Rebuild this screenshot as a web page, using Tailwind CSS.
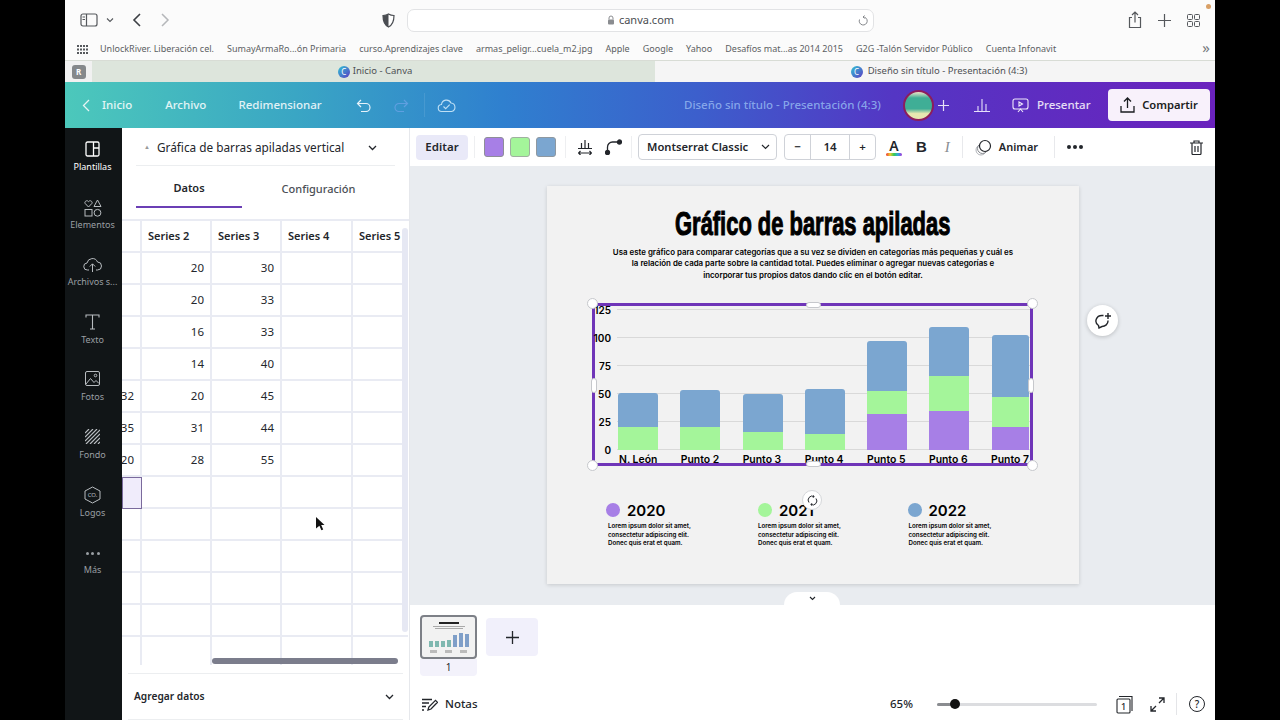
<!DOCTYPE html>
<html lang="es">
<head>
<meta charset="UTF-8">
<title>Diseño sin título - Canva</title>
<script src="https://cdn.jsdelivr.net/npm/@tailwindcss/browser@4"></script>
</head>
<body class="bg-black font-['Noto_Sans',sans-serif] overflow-hidden">
<div class="relative w-[1150px] h-[720px] ml-[65px] bg-white flex flex-col overflow-hidden">

  <!-- safari toolbar -->
  <div class="h-[38px] pt-[2px] bg-[#fbfbfb] flex items-center text-[#55585c] relative">
    <svg class="ml-[15px] w-[18px] h-[14px]" viewBox="0 0 18 14" fill="none" stroke="currentColor" stroke-width="1.2"><rect x="1" y="1" width="16" height="12" rx="2"/><path d="M6.5 1v12M2.5 4h2.500M2.500 6.500h2.500" /></svg>
    <svg class="ml-[8px] w-[8px] h-[6px]" viewBox="0 0 8 6" fill="none" stroke="currentColor" stroke-width="1.1"><path d="M1 1.500l3 3 3-3"/></svg>
    <svg class="ml-[18px] w-[10px] h-[16px]" viewBox="0 0 10 16" fill="none" stroke="#3c3f44" stroke-width="1.600"><path d="M8 2L2 8l6 6"/></svg>
    <svg class="ml-[18px] w-[10px] h-[16px]" viewBox="0 0 10 16" fill="none" stroke="#b5b7ba" stroke-width="1.500"><path d="M2 2l6 6-6 6"/></svg>
    <svg class="ml-[212px] w-[13px] h-[15px]" viewBox="0 0 13 15"><path d="M6.500 1C8 2 10 2.500 12 2.500c0 5-1.500 9.500-5.500 11.500C2.500 12 1 7.500 1 2.500 3 2.500 5 2 6.500 1z" fill="#fff" stroke="#4a4d52" stroke-width="1.200"/><path d="M6.500 1C5 2 3 2.500 1 2.500c0 5 1.500 9.500 5.500 11.500z" fill="#4a4d52"/></svg>
    <div class="ml-[12px] w-[467px] h-[23px] bg-white border border-[#e2e3e5] rounded-[7px] flex items-center justify-center relative text-[11px] text-[#4a4d52]">
      <svg class="w-[8px] h-[10px] mr-[4px]" viewBox="0 0 8 10"><path d="M2 4.500V3a2 2 0 014 0v1.500" fill="none" stroke="#8a8c90"/><rect x="1" y="4.500" width="6" height="5" rx="1" fill="#8a8c90"/></svg>
      canva.com
      <svg class="absolute right-[4px] w-[11px] h-[12px]" viewBox="0 0 11 12" fill="none" stroke="#85888c"><path d="M6.500 1.500L5 3l1.500 1.500M5 3a4 4 0 11-3.500 2.500"/></svg>
    </div>
    <svg class="ml-[254px] w-[14px] h-[18px]" viewBox="0 0 14 18" fill="none" stroke="#55585c" stroke-width="1.200"><path d="M4 6.500H1.500v10h11v-10H10M7 11.500V1.500M4 4l3-3 3 3"/></svg>
    <svg class="ml-[16px] w-[13px] h-[13px]" viewBox="0 0 13 13" stroke="#55585c" stroke-width="1.200"><path d="M6.500 0v13M0 6.500h13"/></svg>
    <svg class="ml-[16px] w-[13px] h-[13px]" viewBox="0 0 13 13" fill="none" stroke="#55585c"><rect x=".5" y=".5" width="5" height="5" rx="1"/><rect x="7.500" y=".5" width="5" height="5" rx="1"/><rect x=".5" y="7.500" width="5" height="5" rx="1"/><rect x="7.500" y="7.500" width="5" height="5" rx="1"/></svg>
    <span class="absolute right-[4px] top-[4px] w-[5px] h-[5px] rounded-full bg-[#d9a066]"></span>
  </div>

  <!-- bookmarks -->
  <div class="h-[22px] bg-[#fbfbfb] flex items-center text-[9px] text-[#5c5f63] whitespace-nowrap relative">
    <svg class="ml-[12px] w-[11px] h-[9px]" viewBox="0 0 11 9" fill="#55585c"><rect width="2" height="2"/><rect x="3" width="2" height="2"/><rect x="6" width="2" height="2"/><rect x="9" width="2" height="2"/><rect y="3.500" width="2" height="2"/><rect x="3" y="3.500" width="2" height="2"/><rect x="6" y="3.500" width="2" height="2"/><rect x="9" y="3.500" width="2" height="2"/><rect y="7" width="2" height="2"/><rect x="3" y="7" width="2" height="2"/><rect x="6" y="7" width="2" height="2"/><rect x="9" y="7" width="2" height="2"/></svg>
    <div class="ml-[12px] flex gap-[13px]">
      <span>UnlockRiver. Liberación cel.</span>
      <span>SumayArmaRo...ón Primaria</span>
      <span>curso.Aprendizajes clave</span>
      <span>armas_peligr...cuela_m2.jpg</span>
      <span>Apple</span>
      <span>Google</span>
      <span>Yahoo</span>
      <span>Desafíos mat...as 2014 2015</span>
      <span>G2G -Talón Servidor Público</span>
      <span>Cuenta Infonavit</span>
    </div>
    <span class="absolute right-[5px] text-[15px] text-[#77797d] -top-[2px]">»</span>
  </div>

  <!-- tabs -->
  <div class="h-[22px] flex text-[9.5px] text-[#4d5054] border-t border-[#d8dcd5]">
    <div class="w-[27px] bg-[#f1f1f1] flex items-center justify-center">
      <span class="w-[14px] h-[14px] bg-[#85888b] rounded-[3px] text-white text-[8px] font-bold flex items-center justify-center">R</span>
    </div>
    <div class="w-[563px] bg-[#dde5dc] flex items-center justify-center gap-[3px] pl-[3px]">
      <span class="w-[12px] h-[12px] rounded-full bg-[linear-gradient(135deg,#2fc4d4,#5b3bc4)] text-white text-[8px] leading-[12px] text-center">C</span>Inicio - Canva
    </div>
    <div class="flex-1 bg-[#f5f5f5] flex items-center justify-center gap-[5px] pl-[8px]">
      <span class="w-[12px] h-[12px] rounded-full bg-[linear-gradient(135deg,#2fc4d4,#5b3bc4)] text-white text-[8px] leading-[12px] text-center">C</span>Diseño sin título - Presentación (4:3)
    </div>
  </div>

  <!-- canva header -->
  <div class="h-[46px] bg-[linear-gradient(90deg,#4cc8bb,#3aa6c4_20%,#2f80cf_38%,#3c5fcc_55%,#5436c4_72%,#6a22bd)] flex items-center text-white/85 text-[11.500px] font-medium relative">
    <svg class="ml-[17px] w-[8px] h-[13px]" viewBox="0 0 8 13" fill="none" stroke="#e6f4f4" stroke-width="1.300"><path d="M7 1L1.500 6.500 7 12"/></svg>
    <span class="ml-[12px]">Inicio</span>
    <span class="ml-[33px]">Archivo</span>
    <span class="ml-[32px]">Redimensionar</span>
    <svg class="ml-[34px] w-[16px] h-[13px]" viewBox="0 0 16 13" fill="none" stroke="#e6f2fa" stroke-width="1.200"><path d="M5 1L1.500 4.500 5 8M1.500 4.500H10a4 4 0 010 8H5"/></svg>
    <svg class="ml-[21px] w-[16px] h-[13px]" viewBox="0 0 16 13" fill="none" stroke="#5f9fe0" stroke-width="1.200"><path d="M11 1l3.500 3.500L11 8M14.500 4.500H6a4 4 0 000 8h5"/></svg>
    <span class="ml-[15px] w-px h-[24px] bg-white/10"></span>
    <svg class="ml-[12px] w-[19px] h-[15px]" viewBox="0 0 19 15" fill="none" stroke="#bfe0f5" stroke-width="1.100"><path d="M5 13.500a3.500 3.500 0 01-.5-7 5 5 0 019.500-1.500 4.300 4.300 0 01.5 8.500z"/><path d="M6.500 8.500l2.200 2.200 4-4"/></svg>
    <span class="absolute left-[619px] text-[#8fb1ee]/90">Diseño sin título - Presentación (4:3)</span>
    <div class="absolute left-[838px] w-[31px] h-[31px] rounded-full border-2 border-[#8c1d5c] overflow-hidden bg-[linear-gradient(180deg,#f0e6c8_0,#3fae96_22%,#3fae96_62%,#e8e6b0_80%)]"></div>
    <svg class="absolute left-[873px] w-[11px] h-[11px]" viewBox="0 0 11 11" stroke="#fff" stroke-opacity=".85" stroke-width="1.200"><path d="M5.500 0v11M0 5.500h11"/></svg>
    <svg class="absolute left-[909px] w-[16px] h-[14px]" viewBox="0 0 16 14" stroke="#e6e0fa" stroke-width="1.100"><path d="M0 13.500h16M4 13V8M8 13V1M12 13V6"/></svg>
    <svg class="absolute left-[947px] w-[17px] h-[17px]" viewBox="0 0 17 17" fill="none" stroke="#f0eafc" stroke-width="1.100"><rect x="1" y="2" width="15" height="10" rx="2"/><path d="M7 5l3.500 2L7 9zM6 15l2.500-3 2.500 3"/></svg>
    <span class="absolute left-[972px]">Presentar</span>
    <div class="absolute left-[1043px] w-[102px] h-[32px] bg-[#f8f1fb] rounded-[4px] flex items-center justify-center gap-[7px] text-[#1a1c20] font-semibold text-[11.200px]">
      <svg class="w-[15px] h-[16px]" viewBox="0 0 15 16" fill="none" stroke="#1a1c20" stroke-width="1.300"><path d="M1 9v6h13V9M7.500 11V1.500M4 4.500l3.500-3.500 3.500 3.500"/></svg>
      Compartir
    </div>
  </div>

  <!-- workspace -->
  <div class="flex-1 flex min-h-0">

    <!-- icon rail -->
    <aside class="w-[57px] bg-[#111517] text-[#9a9fa3] text-[9px] flex flex-col items-center pt-[13px] pr-[2px]">
      <div class="h-[57.500px] flex flex-col items-center text-white">
        <svg class="w-[15px] h-[16px] mb-[3px]" viewBox="0 0 15 16" fill="none" stroke="#fff" stroke-width="1.300"><rect x="1" y="1" width="13" height="14" rx="1.500"/><path d="M8.500 1v14M8.500 7H14"/></svg>Plantillas
      </div>
      <div class="h-[57.500px] flex flex-col items-center">
        <svg class="w-[18px] h-[18px] mb-[1px]" viewBox="0 0 18 18" fill="none" stroke="#b8bcc0"><path d="M4.500 8L1 4.300C.2 2.500 3 .6 4.500 2.600 6 .6 8.800 2.500 8 4.300zM13.500 1L17 7.500h-7z"/><rect x="1" y="10.500" width="7" height="6.500"/><circle cx="13.500" cy="13.800" r="3.400"/></svg>Elementos
      </div>
      <div class="h-[57.500px] flex flex-col items-center whitespace-nowrap">
        <svg class="w-[19px] h-[17px] mb-[2px]" viewBox="0 0 19 17" fill="none" stroke="#b8bcc0"><path d="M6 14H4.500a3.500 3.500 0 01-.5-7 5.500 5.500 0 0110.500-1 4 4 0 010 8H13M9.500 16V8M6.800 10.500l2.700-2.700 2.700 2.700"/></svg>Archivos s...
      </div>
      <div class="h-[57.500px] flex flex-col items-center">
        <svg class="w-[15px] h-[16px] mb-[3px]" viewBox="0 0 15 16" fill="none" stroke="#b8bcc0" stroke-width="1.100"><path d="M1 3.500V1h13v2.500M7.500 1v14M5 15h5"/></svg>Texto
      </div>
      <div class="h-[57.500px] flex flex-col items-center">
        <svg class="w-[15px] h-[15px] mb-[4px]" viewBox="0 0 15 15" fill="none" stroke="#b8bcc0"><rect x=".5" y=".5" width="14" height="14" rx="1.500"/><circle cx="10.500" cy="4.500" r="1.300"/><path d="M1 13l4.500-5.500L9 11.500l2-2 3 3"/></svg>Fotos
      </div>
      <div class="h-[57.500px] flex flex-col items-center">
        <svg class="w-[15px] h-[15px] mb-[4px]" viewBox="0 0 15 15" stroke="#b8bcc0" stroke-width="1.200"><path d="M0 4L4 0M0 8L8 0M0 12L12 0M1 15L15 1M5 15L15 5M9 15l6-6M13 15l2-2"/></svg>Fondo
      </div>
      <div class="h-[57.500px] flex flex-col items-center">
        <svg class="w-[17px] h-[18px] mb-[2px]" viewBox="0 0 17 18" fill="none" stroke="#b8bcc0"><path d="M8.500 1L16 5v8l-7.500 4L1 13V5z"/><text x="8.500" y="11" font-size="6" fill="#b8bcc0" stroke="none" text-anchor="middle">CO.</text></svg>Logos
      </div>
      <div class="h-[57.500px] flex flex-col items-center pt-[8px]">
        <div class="flex gap-[2.500px] mb-[8px]"><i class="w-[3px] h-[3px] rounded-full bg-[#9a9fa3]"></i><i class="w-[3px] h-[3px] rounded-full bg-[#9a9fa3]"></i><i class="w-[3px] h-[3px] rounded-full bg-[#9a9fa3]"></i></div>Más
      </div>
    </aside>

    <!-- data panel -->
    <section class="w-[288px] flex flex-col text-[#23262b] relative border-r border-[#e6e8ec]">
      <div class="h-[38px] pt-[2px] mx-[14px] flex items-center border-b border-[#eceef0] text-[11.800px] pl-[8px] pr-[18px]">
        <span class="text-[6px] text-[#999] mr-[7px]">▲</span>
        <span class="flex-1">Gráfica de barras apiladas vertical</span>
        <svg class="w-[9px] h-[6px]" viewBox="0 0 9 6" fill="none" stroke="#23262b" stroke-width="1.300"><path d="M1 1l3.500 3.500L8 1"/></svg>
      </div>
      <div class="h-[42px] ml-[14px] mr-[14px] flex text-[11px] font-semibold">
        <div class="w-[106px] flex items-center justify-center border-b-2 border-[#6b3fb5] h-[42px] pt-[5px]">Datos</div>
        <div class="flex-1 flex items-center justify-center text-[#4b4f56] font-medium pt-[5px]">Configuración</div>
      </div>

      <!-- sheet -->
      <div class="mt-[11px] h-[446px] overflow-hidden grid grid-cols-[20px_70px_70px_71px_55px] auto-rows-[32px] text-[11.500px] [&>div]:border-b-2 [&>div]:border-r-2 [&>div]:border-[#e9ebf3] [&>div]:flex [&>div]:items-center [&>div]:justify-end [&>div]:pr-[6px] border-t-2 border-[#e9ebf3] relative">
        <div></div><div class="!justify-start !pr-0 pl-[6px] font-semibold text-[11px]">Series 2</div><div class="!justify-start !pr-0 pl-[6px] font-semibold text-[11px]">Series 3</div><div class="!justify-start !pr-0 pl-[6px] font-semibold text-[11px]">Series 4</div><div class="!justify-start !pr-0 pl-[6px] font-semibold text-[11px] whitespace-nowrap overflow-hidden !border-r-0">Series 5</div>
        <div></div><div>20</div><div>30</div><div></div><div class="!border-r-0"></div>
        <div></div><div>20</div><div>33</div><div></div><div class="!border-r-0"></div>
        <div></div><div>16</div><div>33</div><div></div><div class="!border-r-0"></div>
        <div></div><div>14</div><div>40</div><div></div><div class="!border-r-0"></div>
        <div class="overflow-hidden">32</div><div>20</div><div>45</div><div></div><div class="!border-r-0"></div>
        <div class="overflow-hidden">35</div><div>31</div><div>44</div><div></div><div class="!border-r-0"></div>
        <div class="overflow-hidden">20</div><div>28</div><div>55</div><div></div><div class="!border-r-0"></div>
        <div class="!bg-[#f0ecfb] !border !border-[#7a6a9c]"></div><div></div><div></div><div></div><div class="!border-r-0"></div>
        <div></div><div></div><div></div><div></div><div class="!border-r-0"></div>
        <div></div><div></div><div></div><div></div><div class="!border-r-0"></div>
        <div></div><div></div><div></div><div></div><div class="!border-r-0"></div>
        <div></div><div></div><div></div><div></div><div class="!border-r-0"></div>
        <div></div><div></div><div></div><div></div><div class="!border-r-0"></div>
        <div class="!border-b-0"></div><div class="!border-b-0"></div><div class="!border-b-0"></div><div class="!border-b-0"></div><div class="!border-r-0 !border-b-0"></div>
      </div>
      <span class="absolute left-[280px] top-[100px] w-[6px] h-[404px] rounded-full bg-[#e6e8f3]"></span>
      <span class="absolute left-[90px] top-[530px] w-[186px] h-[6px] rounded-full bg-[#7b7d8c]"></span>

      <div class="mx-[6px] mt-[8px] h-[47px] border-y border-[#eceef0] flex items-center justify-between pl-[6px] pr-[9px] text-[10.200px] font-semibold">
        Agregar datos
        <svg class="w-[9px] h-[6px]" viewBox="0 0 9 6" fill="none" stroke="#23262b" stroke-width="1.300"><path d="M1 1l3.500 3.500L8 1"/></svg>
      </div>
    </section>

    <!-- editor -->
    <div class="flex-1 flex flex-col min-w-0">

      <!-- format toolbar -->
      <div class="h-[38px] bg-white flex items-center text-[12px] text-[#23262b] relative">
        <div class="ml-[6px] w-[52px] h-[25px] rounded-[4px] bg-[#e9e9f8] flex items-center justify-center font-semibold text-[11.500px]">Editar</div>
        <span class="ml-[6px] w-px h-[22px] bg-[#eeeff1]"></span>
        <span class="ml-[9px] w-[20px] h-[20px] rounded-[3px] bg-[#a77fe6] border border-[#8e8e98]"></span>
        <span class="ml-[6px] w-[20px] h-[20px] rounded-[3px] bg-[#a4f59a] border border-[#a0b0a0]"></span>
        <span class="ml-[6px] w-[20px] h-[20px] rounded-[3px] bg-[#7ba6d0] border border-[#8e98a0]"></span>
        <span class="ml-[9px] w-px h-[22px] bg-[#eeeff1]"></span>
        <svg class="ml-[12px] w-[14px] h-[16px]" viewBox="0 0 14 16" fill="none" stroke="#23262b" stroke-width="1.200"><path d="M0 9.500h14M3.500 9V4M7 9V1M10.500 9V4M.5 14h13M2.500 12L.5 14l2 2M11.500 12l2 2-2 2"/></svg>
        <svg class="ml-[13px] w-[17px] h-[16px]" viewBox="0 0 17 16" fill="none" stroke="#23262b" stroke-width="1.300"><path d="M2.500 13V8a5 5 0 015-5H13"/><circle cx="2.500" cy="13.500" r="2" fill="#23262b"/><circle cx="14.500" cy="3" r="2" fill="#23262b"/></svg>
        <span class="ml-[9px] w-px h-[22px] bg-[#eeeff1]"></span>
        <div class="ml-[6px] w-[139px] h-[26px] border border-[#cfd2d8] rounded-[4px] flex items-center justify-between pl-[8px] pr-[6px] font-semibold text-[11.200px] whitespace-nowrap">
          Montserrat Classic
          <svg class="w-[9px] h-[6px]" viewBox="0 0 9 6" fill="none" stroke="#23262b" stroke-width="1.200"><path d="M1 1l3.500 3.500L8 1"/></svg>
        </div>
        <div class="ml-[7px] w-[92px] h-[26px] border border-[#cfd2d8] rounded-[4px] flex items-center font-semibold text-[11.500px]">
          <span class="w-[26px] text-center border-r border-[#cfd2d8] leading-[24px]">−</span>
          <span class="flex-1 text-center">14</span>
          <span class="w-[26px] text-center border-l border-[#cfd2d8] leading-[24px]">+</span>
        </div>
        <div class="ml-[10px] w-[16px] flex flex-col items-center">
          <span class="text-[14px] leading-[14px] font-semibold">A</span>
          <span class="w-[16px] h-[3px] rounded-full bg-[linear-gradient(90deg,#e33,#ec3,#3c5,#3ad,#a3d)]"></span>
        </div>
        <span class="ml-[14px] text-[15px] font-bold font-['Liberation_Sans',sans-serif]">B</span>
        <span class="ml-[18px] text-[15px] italic text-[#8a8d92] font-['Liberation_Serif',serif]">I</span>
        <span class="ml-[12px] w-px h-[22px] bg-[#e8e9ec]"></span>
        <svg class="ml-[12px] w-[17px] h-[17px]" viewBox="0 0 17 17" fill="none"><circle cx="6" cy="11" r="5" stroke="#b0b3b8"/><circle cx="7.500" cy="9.500" r="5" stroke="#85888d"/><circle cx="10" cy="7" r="5.500" fill="#fff" stroke="#23262b" stroke-width="1.200"/></svg>
        <span class="ml-[7px] font-semibold text-[11px]">Animar</span>
        <span class="ml-[16px] w-px h-[22px] bg-[#e8e9ec]"></span>
        <div class="ml-[12px] flex gap-[2.500px]"><i class="w-[3.500px] h-[3.500px] rounded-full bg-[#23262b]"></i><i class="w-[3.500px] h-[3.500px] rounded-full bg-[#23262b]"></i><i class="w-[3.500px] h-[3.500px] rounded-full bg-[#23262b]"></i></div>
        <svg class="absolute left-[780px] w-[13px] h-[15px]" viewBox="0 0 13 15" fill="none" stroke="#23262b" stroke-width="1.200"><path d="M0 3h13M4 3V1h5v2M2 3v10.500a1 1 0 001 1h7a1 1 0 001-1V3M5 6v6M8 6v6"/></svg>
      </div>

      <!-- canvas area -->
      <div class="flex-1 bg-[#e9ecf0] relative">
        <div class="absolute left-[137px] top-[20px] w-[532px] h-[398px] bg-[#f2f2f2] shadow-[0_1px_4px_rgba(0,0,0,0.15)] flex flex-col items-center text-black">
          <h1 class="mt-[20px] h-[36px] text-[31px] leading-[36px] font-black font-['Liberation_Sans',sans-serif] whitespace-nowrap scale-x-[0.707] scale-y-[1.1] [-webkit-text-stroke:1px_black]">Gráfico de barras apiladas</h1>
          <p class="mt-[5px] text-[7.900px] leading-[11.300px] font-semibold text-center font-['Inter',sans-serif] whitespace-nowrap">Usa este gráfico para comparar categorías que a su vez se dividen en categorías más pequeñas y cuál es<br>la relación de cada parte sobre la cantidad total. Puedes eliminar o agregar nuevas categorías e<br>incorporar tus propios datos dando clic en el botón editar.</p>

          <!-- chart -->
          <div class="absolute left-[45px] top-[117px] w-[441px] h-[163px] border-[3px] border-[#6f35b8] font-['Inter',sans-serif] font-semibold text-[10px]">
            <div class="absolute left-[22px] right-0 top-[3px] h-[141px] flex flex-col justify-between">
              <i class="block h-px bg-[#d9d9d9]"></i><i class="block h-px bg-[#d9d9d9]"></i><i class="block h-px bg-[#d9d9d9]"></i><i class="block h-px bg-[#d9d9d9]"></i><i class="block h-px bg-[#d9d9d9]"></i><i class="block h-px bg-[#d9d9d9]"></i>
            </div>
            <div class="absolute left-0 w-[16px] top-[-2px] h-[152px] flex flex-col justify-between items-end leading-[12px]">
              <span>125</span><span>100</span><span>75</span><span>50</span><span>25</span><span>0</span>
            </div>
            <div class="absolute left-[23px] right-0 bottom-[13px] flex gap-[22.300px] items-end">
              <div class="w-[40px] shrink-0 flex flex-col"><i class="block h-[34px] rounded-t-[3px] bg-[#7ba6d0]"></i><i class="block h-[23px] bg-[#a4f59a]"></i></div>
              <div class="w-[40px] shrink-0 flex flex-col"><i class="block h-[37px] rounded-t-[3px] bg-[#7ba6d0]"></i><i class="block h-[23px] bg-[#a4f59a]"></i></div>
              <div class="w-[40px] shrink-0 flex flex-col"><i class="block h-[38px] rounded-t-[3px] bg-[#7ba6d0]"></i><i class="block h-[18px] bg-[#a4f59a]"></i></div>
              <div class="w-[40px] shrink-0 flex flex-col"><i class="block h-[45px] rounded-t-[3px] bg-[#7ba6d0]"></i><i class="block h-[16px] bg-[#a4f59a]"></i></div>
              <div class="w-[40px] shrink-0 flex flex-col"><i class="block h-[50px] rounded-t-[3px] bg-[#7ba6d0]"></i><i class="block h-[23px] bg-[#a4f59a]"></i><i class="block h-[36px] bg-[#a77fe6]"></i></div>
              <div class="w-[40px] shrink-0 flex flex-col"><i class="block h-[49px] rounded-t-[3px] bg-[#7ba6d0]"></i><i class="block h-[35px] bg-[#a4f59a]"></i><i class="block h-[39px] bg-[#a77fe6]"></i></div>
              <div class="w-[37px] shrink-0 flex flex-col"><i class="block h-[62px] rounded-t-[3px] bg-[#7ba6d0]"></i><i class="block h-[30px] bg-[#a4f59a]"></i><i class="block h-[23px] bg-[#a77fe6]"></i></div>
            </div>
            <div class="absolute left-[14px] right-[-9px] bottom-[-3px] flex justify-between leading-[12px] text-[10.400px] whitespace-nowrap px-[10px]">
              <span>N. León</span><span>Punto 2</span><span>Punto 3</span><span>Punto 4</span><span>Punto 5</span><span>Punto 6</span><span>Punto 7</span>
            </div>
            <span class="absolute -left-[8px] -top-[8px] w-[11px] h-[11px] rounded-full bg-white border border-[#c6c8cc]"></span>
            <span class="absolute -right-[8px] -top-[8px] w-[11px] h-[11px] rounded-full bg-white border border-[#c6c8cc]"></span>
            <span class="absolute -left-[8px] -bottom-[8px] w-[11px] h-[11px] rounded-full bg-white border border-[#c6c8cc]"></span>
            <span class="absolute -right-[8px] -bottom-[8px] w-[11px] h-[11px] rounded-full bg-white border border-[#c6c8cc]"></span>
            <span class="absolute left-[211px] -top-[4px] w-[15px] h-[6px] rounded-full bg-white border border-[#c6c8cc]"></span>
            <span class="absolute left-[211px] -bottom-[4px] w-[15px] h-[6px] rounded-full bg-white border border-[#c6c8cc]"></span>
            <span class="absolute -left-[4px] top-[72px] w-[6px] h-[15px] rounded-full bg-white border border-[#c6c8cc]"></span>
            <span class="absolute -right-[4px] top-[72px] w-[6px] h-[15px] rounded-full bg-white border border-[#c6c8cc]"></span>
          </div>

          <!-- legend -->
          <div class="absolute left-[59px] top-[315px] grid grid-cols-[152px_149.500px_100px] font-['Inter',sans-serif]">
            <div>
              <div class="flex items-center gap-[7px] text-[15px] leading-[20px] font-semibold"><span class="w-[14px] h-[14px] rounded-full bg-[#a77fe6] -mt-[3px]"></span>2020</div>
              <p class="ml-[2px] mt-[1px] text-[6.200px] leading-[8.500px] font-semibold whitespace-nowrap">Lorem ipsum dolor sit amet,<br>consectetur adipiscing elit.<br>Donec quis erat et quam.</p>
            </div>
            <div>
              <div class="flex items-center gap-[7px] text-[15px] leading-[20px] font-semibold"><span class="w-[14px] h-[14px] rounded-full bg-[#a4f59a] -mt-[3px]"></span>2021</div>
              <p class="ml-[0px] mt-[1px] text-[6.200px] leading-[8.500px] font-semibold whitespace-nowrap">Lorem ipsum dolor sit amet,<br>consectetur adipiscing elit.<br>Donec quis erat et quam.</p>
            </div>
            <div>
              <div class="flex items-center gap-[7px] text-[15px] leading-[20px] font-semibold"><span class="w-[14px] h-[14px] rounded-full bg-[#7ba6d0] -mt-[3px]"></span>2022</div>
              <p class="ml-[1px] mt-[1px] text-[6.200px] leading-[8.500px] font-semibold whitespace-nowrap">Lorem ipsum dolor sit amet,<br>consectetur adipiscing elit.<br>Donec quis erat et quam.</p>
            </div>
          </div>

          <!-- rotate handle -->
          <span class="absolute left-[255px] top-[304px] w-[20px] h-[20px] rounded-full bg-white border border-[#d5d7da] flex items-center justify-center">
            <svg class="w-[11px] h-[11px]" viewBox="0 0 11 11" fill="none" stroke="#23262b"><path d="M2 7.500A4 4 0 017 1.500M9 3.500A4 4 0 014 9.500M6 .5l1.200 1L6 2.800M5 8.200L3.800 9.500 5 10.500"/></svg>
          </span>
        </div>

        <!-- comment bubble -->
        <span class="absolute left-[677px] top-[139px] w-[31px] h-[31px] rounded-full bg-white shadow-[0_1px_4px_rgba(0,0,0,0.2)] flex items-center justify-center">
          <svg class="w-[17px] h-[16px]" viewBox="0 0 17 16" fill="none" stroke="#23262b" stroke-width="1.400"><path d="M9.500 2.500H8a6 5.500 0 00-3.500 10L5 15l3-1.500a6 5.500 0 006-5.500V7.500"/><path d="M14 0v6M11 3h6"/></svg>
        </span>

        <!-- collapse tab -->
        <span class="absolute left-[374px] bottom-0 w-[56px] h-[13px] bg-white rounded-t-[14px] flex items-center justify-center">
          <svg class="w-[7px] h-[5px]" viewBox="0 0 7 5" fill="none" stroke="#23262b" stroke-width="1.100"><path d="M1 1l2.500 2.500L6 1"/></svg>
        </span>
      </div>

      <!-- pages strip -->
      <div class="h-[115px] bg-white relative text-[#23262b]">
        <div class="absolute left-[10px] top-[10px] w-[57px] h-[44px] rounded-[4px] border-2 border-[#7d8087] bg-[#f2f2f2] flex flex-col items-center pt-[5px] overflow-hidden">
          <i class="block w-[20px] h-[2px] bg-[#222]"></i>
          <i class="block w-[32px] h-[1px] mt-[2px] bg-[#aaa]"></i>
          <i class="block w-[28px] h-[1px] mt-[1px] bg-[#aaa]"></i>
          <div class="flex items-end gap-[2px] mt-[3px] h-[15px]">
            <i class="block w-[4px] h-[6px] bg-[#7fb8b0]"></i><i class="block w-[4px] h-[6px] bg-[#7fb8b0]"></i><i class="block w-[4px] h-[6px] bg-[#7fb8b0]"></i><i class="block w-[4px] h-[7px] bg-[#7fb8b0]"></i><i class="block w-[4px] h-[12px] bg-[#7f9fc8]"></i><i class="block w-[4px] h-[14px] bg-[#7f9fc8]"></i><i class="block w-[4px] h-[13px] bg-[#7f9fc8]"></i>
          </div>
          <div class="flex gap-[8px] mt-[3px]"><i class="block w-[7px] h-[3px] bg-[#bbb]"></i><i class="block w-[7px] h-[3px] bg-[#bbb]"></i><i class="block w-[7px] h-[3px] bg-[#bbb]"></i></div>
        </div>
        <div class="absolute left-[10px] top-[54px] w-[57px] h-[17px] bg-[#f3f2fb] rounded-b-[4px] text-[10px] leading-[17px] text-center">1</div>
        <div class="absolute left-[76px] top-[13px] w-[52px] h-[38px] bg-[#f1f0fb] rounded-[4px] flex items-center justify-center">
          <svg class="w-[13px] h-[13px]" viewBox="0 0 13 13" stroke="#23262b" stroke-width="1.300"><path d="M6.500 0v13M0 6.500h13"/></svg>
        </div>
        <div class="absolute left-0 right-0 bottom-[1px] h-[30px] flex items-center text-[11.500px] font-medium">
          <svg class="ml-[12px] w-[16px] h-[13px]" viewBox="0 0 16 13" fill="none" stroke="#23262b" stroke-width="1.300"><path d="M0 1.500h10M0 5h7M0 8.500h4M0 12h2M6 12l.800-3L13.500 2.300l2 2L9 11z"/></svg>
          <span class="ml-[7px]">Notas</span>
          <span class="absolute left-[480px]">65%</span>
          <span class="absolute left-[527px] w-[160px] h-[3px] rounded-full bg-[#dcdde0]"></span>
          <span class="absolute left-[527px] w-[14px] h-[3px] rounded-full bg-[#8a8c90]"></span>
          <span class="absolute left-[540px] w-[10px] h-[10px] rounded-full bg-[#111]"></span>
          <svg class="absolute left-[706px] w-[17px] h-[19px]" viewBox="0 0 17 19" fill="none" stroke="#23262b" stroke-width="1.100"><path d="M3 1.500h13V16"/><rect x="1" y="4" width="13" height="14" rx="1"/><text x="7.500" y="14.500" font-size="9" fill="#23262b" stroke="none" text-anchor="middle">1</text></svg>
          <svg class="absolute left-[740px] w-[15px] h-[15px]" viewBox="0 0 15 15" fill="none" stroke="#23262b" stroke-width="1.300"><path d="M9 1h5v5M14 1L9 6M6 14H1V9M1 14l5-5"/></svg>
          <span class="absolute left-[766px] w-px h-[22px] bg-[#e4e5e8]"></span>
          <span class="absolute left-[779px] w-[16px] h-[16px] rounded-full border border-[#23262b] text-[10px] leading-[14px] text-center">?</span>
        </div>
      </div>
    </div>
  </div>

  <!-- mouse pointer -->
  <svg class="absolute left-[251px] top-[517px] w-[9px] h-[14px]" viewBox="0 0 9 14"><path d="M0 0l8.500 8H5.200l2 4.500-1.800.8-2-4.500L0 11.500z" fill="#111"/></svg>
</div>
</body>
</html>
